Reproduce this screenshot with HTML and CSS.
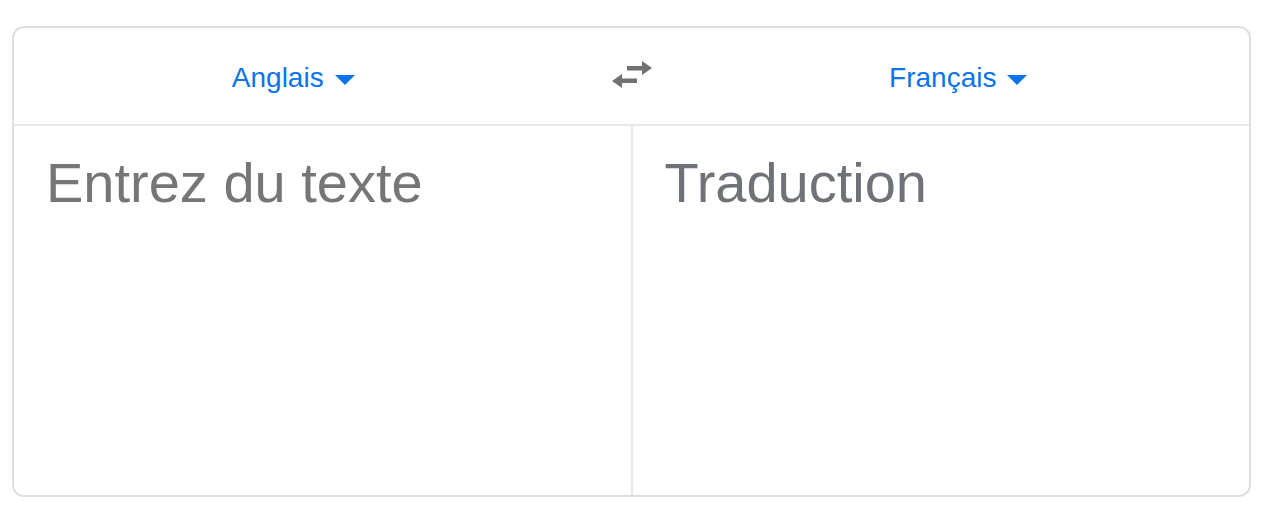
FILE: index.html
```html
<!DOCTYPE html>
<html lang="fr">
<head>
    <meta charset="UTF-8">
    <meta name="viewport" content="width=device-width, initial-scale=1.0">
    <title>Traducteur</title>
    <link rel="stylesheet" href="styles.css">
</head>
<body>
    <div class="translator">
        <div class="lang-bar">
            <button class="lang lang-source">
                <span>Anglais</span>
                <svg class="caret" width="20" height="10" viewBox="0 0 20 10"><path d="M0 0h20L10 10z"/></svg>
            </button>
            <button class="swap" title="Inverser les langues">
                <svg width="40" height="27" viewBox="0 0 40 27">
                    <path d="M15 5h15V0l10 7L30 14V9.5H15z"/>
                    <path d="M25 17.5H10V13L0 20l10 7v-5H25z"/>
                </svg>
            </button>
            <button class="lang lang-target">
                <span>Français</span>
                <svg class="caret" width="20" height="10" viewBox="0 0 20 10"><path d="M0 0h20L10 10z"/></svg>
            </button>
        </div>
        <div class="panes">
            <textarea class="pane source" placeholder="Entrez du texte"></textarea>
            <div class="pane target">Traduction</div>
        </div>
    </div>
</body>
</html>
```
FILE: styles.css
```css
* {
    box-sizing: border-box;
}

body {
    font-family: "Liberation Sans", Arial, sans-serif;
    margin: 0;
    padding: 26px 0 0 12px;
    background-color: #fff;
}

.translator {
    width: 1239px;
    height: 471px;
    border: 2px solid #dfdfe2;
    border-radius: 12px;
    display: flex;
    flex-direction: column;
    overflow: hidden;
}

.lang-bar {
    display: grid;
    grid-template-columns: 1fr 40px 1fr;
    align-items: center;
    height: 98px;
    border-bottom: 2px solid #e8e8e8;
}

.lang {
    display: flex;
    justify-content: center;
    align-items: center;
    gap: 11px;
    border: none;
    background: none;
    font-family: inherit;
    font-size: 28px;
    color: #0b73ec;
    cursor: pointer;
    padding: 0;
    margin-top: 3px;
}

.lang-source {
    padding-right: 39px;
}

.lang-target {
    padding-left: 16px;
}

.caret {
    fill: #0b73ec;
    margin-top: 4px;
}

.swap {
    border: none;
    background: none;
    padding: 0;
    margin-top: -3px;
    display: flex;
    cursor: pointer;
}

.swap svg {
    fill: #717171;
}

.panes {
    flex: 1;
    display: flex;
}

.pane {
    flex: 1;
    padding: 24px 32px;
    font-family: inherit;
    font-size: 56px;
    line-height: normal;
    border: none;
    margin: 0;
}

.source {
    resize: none;
    outline: none;
    border-right: 2px solid #e8e8e8;
    color: #333;
}

.source::placeholder {
    color: #767676;
    opacity: 1;
}

.target {
    color: #6f7378;
}
```
